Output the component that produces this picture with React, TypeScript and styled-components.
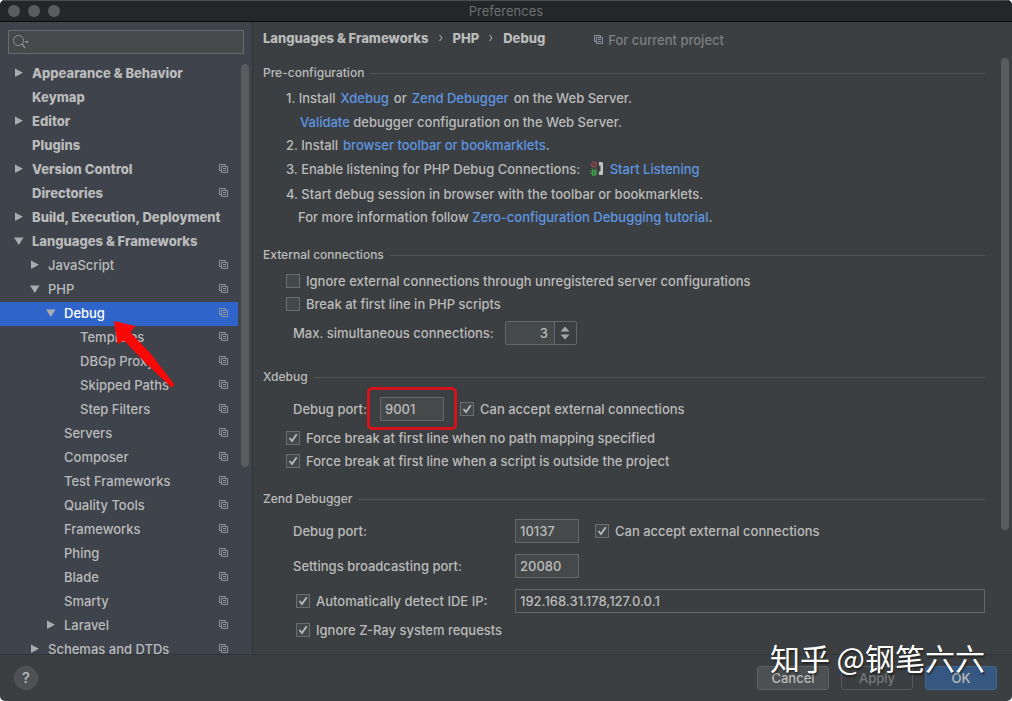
import React, { useId } from "react";
import styled, { createGlobalStyle, css } from "styled-components";

const GlobalStyle = createGlobalStyle`
  *, *::before, *::after { box-sizing: border-box; }
  html, body { margin: 0; background: #ffffff; }
  body, button, input {
    font-family: Inter, "Noto Sans CJK SC", sans-serif;
    font-size: 13px;
    line-height: 16px;
    color: #bbbbbb;
  }
`;

const Window = styled.div`
  position: relative;
  height: 100vh;
  display: flex;
  flex-direction: column;
  background: #3c3f41;
  border-radius: 5px;
  overflow: hidden;
`;

const TitleBar = styled.header`
  flex: none;
  height: 22px;
  display: grid;
  grid-template-columns: 1fr auto 1fr;
  align-items: center;
  padding: 0 8px;
  background: #242729;
  border-top: 1px solid #4b4e50;
  border-bottom: 1px solid #0a0a0a;
`;

const Lights = styled.div`
  display: flex;
  gap: 8px;
`;

const Light = styled.span`
  width: 12px;
  height: 12px;
  border-radius: 50%;
  background: #5a5c5e;
`;

const WindowTitle = styled.h1`
  margin: 0;
  font-size: 13px;
  font-weight: 400;
  color: #6d6f71;
`;

const Body = styled.div`
  flex: 1;
  min-height: 0;
  display: flex;
`;

const Sidebar = styled.nav`
  flex: none;
  width: 253px;
  display: flex;
  flex-direction: column;
  padding-top: 8px;
  background: #3e434c;
  border-right: 1px solid #313335;
`;

const SearchBox = styled.label`
  flex: none;
  display: flex;
  align-items: center;
  height: 24px;
  margin: 0 8px;
  padding: 0 4px;
  background: #45494a;
  border: 1px solid #686b6d;
`;

const SearchInput = styled.input`
  flex: 1;
  min-width: 0;
  padding: 0 4px;
  border: 0;
  outline: 0;
  background: transparent;
`;

const TreeArea = styled.div`
  flex: 1;
  min-height: 0;
  display: flex;
  gap: 3px;
  padding: 8px 3px 0 0;
  overflow: hidden;
`;

const Tree = styled.ul`
  flex: 1;
  margin: 0;
  padding: 0;
  list-style: none;
`;

const TreeRow = styled.li<{ $level: number; $selected?: boolean }>`
  display: flex;
  align-items: center;
  height: 24px;
  padding: 0 9px 2px ${(p) => 14 + p.$level * 16}px;
  font-weight: ${(p) => (p.$level === 0 ? 800 : 500)};
  white-space: nowrap;
  ${(p) =>
    p.$selected &&
    css`
      background: #2f65ca;
      color: #ffffff;
    `}
`;

const ArrowSlot = styled.span`
  flex: none;
  display: flex;
  width: 18px;
`;

const RowLabel = styled.span`
  flex: 1;
`;

const Thumb = styled.div<{ $share: number }>`
  flex: none;
  width: 8px;
  height: ${(p) => p.$share}%;
  margin-top: 2px;
  border-radius: 4px;
  background: #595b5d;
`;

const Main = styled.main`
  flex: 1;
  min-width: 0;
  display: flex;
  flex-direction: column;
  padding-left: 10px;
  overflow: hidden;
`;

const Header = styled.div`
  flex: none;
  display: flex;
  align-items: center;
  height: 34px;
  padding-bottom: 2px;
`;

const Crumbs = styled.div`
  display: flex;
  align-items: center;
  gap: 10px;
  font-weight: 800;
`;

const ProjectNote = styled.span`
  display: flex;
  align-items: center;
  gap: 4px;
  margin-left: 49px;
  padding-top: 4px;
  color: #7d7f81;
  font-weight: 500;
`;

const Scroller = styled.div`
  flex: 1;
  min-height: 0;
  display: flex;
  gap: 16px;
  padding-right: 3px;
`;

const Form = styled.form`
  flex: 1;
  min-width: 0;
  padding-top: 9px;
  font-weight: 500;
`;

const Section = styled.section`
  margin-bottom: 19px;
`;

const SectionTitle = styled.h2`
  display: flex;
  align-items: center;
  gap: 6px;
  margin: 0;
  font-size: 12px;
  font-weight: 500;
  &::after {
    content: "";
    flex: 1;
    height: 1px;
    background: #515456;
  }
`;

const Steps = styled.ol`
  margin: 0;
  padding: 5px 0 0 23px;
  list-style: none;
`;

const Line = styled.div<{ $height: number; $indent?: number }>`
  display: flex;
  align-items: center;
  gap: 5px;
  height: ${(p) => p.$height}px;
  padding-left: ${(p) => p.$indent ?? 0}px;
  white-space: pre;
`;

const Link = styled.a`
  color: #5c96e2;
  text-decoration: none;
`;

const Options = styled.div`
  padding-top: 6px;
`;

const CheckRow = styled.div`
  display: flex;
  align-items: center;
  height: 23px;
  padding-left: 23px;
`;

const CheckLabel = styled.label`
  display: flex;
  align-items: center;
  gap: 6px;
  white-space: nowrap;
`;

const Tick = styled.input`
  appearance: none;
  flex: none;
  width: 14px;
  height: 14px;
  margin: 0;
  border: 1px solid #6b6d6e;
  background: #43494a;
`;

const TickBox = styled.span`
  position: relative;
  display: flex;
  svg {
    position: absolute;
    inset: 0;
    display: none;
    pointer-events: none;
  }
  input:checked + svg { display: block; }
`;

const TextField = styled.input<{ $wide?: boolean; $plain?: boolean }>`
  width: ${(p) => (p.$wide ? "100%" : "64px")};
  height: 24px;
  padding: 0 4px;
  border: 1px solid #646769;
  border-radius: 0;
  outline: 0;
  background: ${(p) => (p.$plain ? "#3c3f41" : "#45494a")};
  font-weight: 500;
`;

const SpinnerRow = styled.div`
  display: flex;
  align-items: center;
  gap: 11px;
  margin: 6px 0 24px;
  padding-left: 30px;
`;

const Spinner = styled.span`
  display: flex;
  width: 72px;
  height: 24px;
  border: 1px solid #646769;
  border-radius: 2px;
`;

const SpinnerInput = styled.input`
  flex: 1;
  min-width: 0;
  padding: 0 6px;
  border: 0;
  outline: 0;
  background: #45494a;
  text-align: right;
  font-weight: 500;
`;

const SpinnerButtons = styled.span`
  display: flex;
  flex-direction: column;
  width: 22px;
  border-left: 1px solid #646769;
`;

const StepButton = styled.button<{ $up?: boolean }>`
  flex: 1;
  display: flex;
  justify-content: center;
  align-items: ${(p) => (p.$up ? "flex-end" : "flex-start")};
  padding: 1px 0;
  border: 0;
  background: transparent;
`;

const PortRow = styled.div`
  display: flex;
  align-items: center;
  gap: 16px;
  margin: 12px 0 5px;
  padding-left: 30px;
`;

const PortLabel = styled.label`
  width: 71px;
  white-space: nowrap;
`;

const Highlight = styled.span`
  position: relative;
  display: flex;
  &::after {
    content: "";
    position: absolute;
    inset: -10px -13px -9px;
    border: 3px solid #d3131b;
    border-radius: 5px;
    pointer-events: none;
  }
`;

const ZendGrid = styled.div`
  display: grid;
  grid-template-columns: 222px 1fr;
  row-gap: 11px;
  align-items: center;
  margin-top: 12px;
  padding-left: 30px;
`;

const PortCell = styled.div`
  display: flex;
  align-items: center;
  gap: 16px;
`;

const DetectCell = styled.div`
  padding-left: 3px;
`;

const LastTick = styled.div`
  padding: 9px 0 0 33px;
`;

const Footer = styled.footer`
  flex: none;
  display: flex;
  align-items: center;
  justify-content: space-between;
  height: 47px;
  padding: 0 15px 0 14px;
  border-top: 1px solid #323537;
`;

const HelpButton = styled.button`
  width: 24px;
  height: 24px;
  padding: 0;
  border: 1px solid #56595b;
  border-radius: 50%;
  background: #4e5153;
  font-size: 15px;
  font-weight: 500;
`;

const Actions = styled.div`
  display: flex;
  gap: 12px;
`;

const tones = {
  normal: css`
    background: #4c5052;
    border-color: #5e6162;
  `,
  muted: css`
    background: #3c3f41;
    border-color: #575a5c;
    color: #75777a;
  `,
  primary: css`
    background: #365880;
    border-color: #44658c;
  `,
};

const ActionButton = styled.button<{ $tone: keyof typeof tones }>`
  width: 72px;
  height: 24px;
  padding: 0;
  border: 1px solid;
  border-radius: 3px;
  font-weight: 500;
  ${(p) => tones[p.$tone]}
`;

const Pointer = styled.svg`
  position: absolute;
  left: 108px;
  top: 312px;
  pointer-events: none;
`;

const Watermark = styled.div`
  position: absolute;
  right: 27px;
  bottom: 24px;
  font-family: "Noto Sans CJK SC", sans-serif;
  font-size: 30px;
  line-height: 40px;
  color: #ffffff;
  text-shadow: 1px 2px 2px rgba(0, 0, 0, 0.5);
  white-space: nowrap;
  pointer-events: none;
`;

const CopyIcon = ({ color = "#8d949e" }: { color?: string }) => (
  <svg width="10" height="10" viewBox="0 0 10 10" fill="none" stroke={color} aria-hidden="true">
    <path d="M2.500 6.500h-2v-6h6v2" />
    <path d="M2.500 2.500h6v6h-6z" />
    <path d="M4 4.500h3M4 6.500h3" />
  </svg>
);

const TreeArrow = ({ open }: { open: boolean }) => (
  <svg width="10" height="10" viewBox="0 0 10 10" fill="#a9abae" aria-hidden="true">
    {open ? <path d="M0 1.500h9.500L4.750 9z" /> : <path d="M1 0.500v8.500L9 4.750z" />}
  </svg>
);

const SearchIcon = () => (
  <svg width="18" height="14" viewBox="0 0 18 14" fill="none" stroke="#8e9193" aria-hidden="true">
    <circle cx="5.500" cy="5.500" r="5" />
    <path d="M9 9l3 4" strokeWidth="1.300" />
    <path d="M11.500 6h4.500l-2.250 2.500z" fill="#8e9193" stroke="none" />
  </svg>
);

const ListenIcon = () => (
  <svg width="16" height="16" viewBox="0 0 16 16" fill="none" aria-hidden="true">
    <circle cx="5" cy="3.500" r="2.600" stroke="#b5484a" />
    <path d="M3.300 5.200l3.400-3.400" stroke="#b5484a" />
    <path d="M1.500 10h7M1.500 12.500h7M3 7.500l1 1.500M7 7.500L6 9" stroke="#3f9b4c" />
    <ellipse cx="5" cy="12" rx="2.300" ry="3.200" fill="#3f9b4c" />
    <path d="M4 11h2M4 13h2" stroke="#3c3f41" strokeWidth="0.600" />
    <path d="M10 1h2.500q1.500 0 1.500 1.500v10q0 1.500-1.500 1.500H10v-3.500h1.500v-6H10z" fill="#c3c5c7" />
  </svg>
);

const Check = ({ label, checked = false }: { label: string; checked?: boolean }) => {
  const id = useId();
  return (
    <CheckLabel htmlFor={id}>
      <TickBox>
        <Tick id={id} type="checkbox" defaultChecked={checked} />
        <svg width="14" height="14" viewBox="0 0 14 14" fill="none" stroke="#b8babb" strokeWidth="1.800">
          <path d="M3.500 7l2.500 3 4.700-6.800" />
        </svg>
      </TickBox>
      {label}
    </CheckLabel>
  );
};

type Item = { label: string; level: number; arrow?: "open" | "closed"; project?: boolean; selected?: boolean };

const items: Item[] = [
  { label: "Appearance & Behavior", level: 0, arrow: "closed" },
  { label: "Keymap", level: 0 },
  { label: "Editor", level: 0, arrow: "closed" },
  { label: "Plugins", level: 0 },
  { label: "Version Control", level: 0, arrow: "closed", project: true },
  { label: "Directories", level: 0, project: true },
  { label: "Build, Execution, Deployment", level: 0, arrow: "closed" },
  { label: "Languages & Frameworks", level: 0, arrow: "open" },
  { label: "JavaScript", level: 1, arrow: "closed", project: true },
  { label: "PHP", level: 1, arrow: "open", project: true },
  { label: "Debug", level: 2, arrow: "open", project: true, selected: true },
  { label: "Templates", level: 3, project: true },
  { label: "DBGp Proxy", level: 3, project: true },
  { label: "Skipped Paths", level: 3, project: true },
  { label: "Step Filters", level: 3, project: true },
  { label: "Servers", level: 2, project: true },
  { label: "Composer", level: 2, project: true },
  { label: "Test Frameworks", level: 2, project: true },
  { label: "Quality Tools", level: 2, project: true },
  { label: "Frameworks", level: 2, project: true },
  { label: "Phing", level: 2, project: true },
  { label: "Blade", level: 2, project: true },
  { label: "Smarty", level: 2, project: true },
  { label: "Laravel", level: 2, arrow: "closed", project: true },
  { label: "Schemas and DTDs", level: 1, arrow: "closed", project: true },
];

const Chevron = () => (
  <svg width="4" height="8" viewBox="0 0 4 8" fill="none" stroke="#bbbbbb" aria-hidden="true">
    <path d="M0.500 1l2.500 3-2.500 3" />
  </svg>
);

export default function App() {
  return (
    <>
      <GlobalStyle />
      <Window>
        <TitleBar>
          <Lights>
            <Light />
            <Light />
            <Light />
          </Lights>
          <WindowTitle>Preferences</WindowTitle>
        </TitleBar>

        <Body>
          <Sidebar>
            <SearchBox>
              <SearchIcon />
              <SearchInput type="text" aria-label="Search settings" />
            </SearchBox>
            <TreeArea>
              <Tree>
                {items.map((item) => (
                  <TreeRow key={item.label} $level={item.level} $selected={item.selected}>
                    <ArrowSlot>{item.arrow && <TreeArrow open={item.arrow === "open"} />}</ArrowSlot>
                    <RowLabel>{item.label}</RowLabel>
                    {item.project && <CopyIcon />}
                  </TreeRow>
                ))}
              </Tree>
              <Thumb $share={68} />
            </TreeArea>
          </Sidebar>

          <Main>
            <Header>
              <Crumbs>
                <span>Languages &amp; Frameworks</span>
                <Chevron />
                <span>PHP</span>
                <Chevron />
                <span>Debug</span>
              </Crumbs>
              <ProjectNote>
                <CopyIcon />
                For current project
              </ProjectNote>
            </Header>

            <Scroller>
              <Form onSubmit={(e) => e.preventDefault()}>
                <Section>
                  <SectionTitle>Pre-configuration</SectionTitle>
                  <Steps>
                    <li>
                      <Line $height={24}>
                        <span>1. Install</span>
                        <Link href="#xdebug">Xdebug</Link>
                        <span>or</span>
                        <Link href="#zend">Zend Debugger</Link>
                        <span>on the Web Server.</span>
                      </Line>
                      <Line $height={24} $indent={14}>
                        <span>
                          <Link href="#validate">Validate</Link> debugger configuration on the Web Server.
                        </span>
                      </Line>
                    </li>
                    <li>
                      <Line $height={22}>
                        <span>2. Install</span>
                        <span>
                          <Link href="#toolbar">browser toolbar or bookmarklets</Link>.
                        </span>
                      </Line>
                    </li>
                    <li>
                      <Line $height={26}>
                        <span>3. Enable listening for PHP Debug Connections: </span>
                        <ListenIcon />
                        <Link href="#listen">Start Listening</Link>
                      </Line>
                    </li>
                    <li>
                      <Line $height={24}>4. Start debug session in browser with the toolbar or bookmarklets.</Line>
                      <Line $height={22} $indent={12}>
                        <span>
                          For more information follow <Link href="#tutorial">Zero-configuration Debugging tutorial</Link>.
                        </span>
                      </Line>
                    </li>
                  </Steps>
                </Section>

                <Section>
                  <SectionTitle>External connections</SectionTitle>
                  <Options>
                    <CheckRow>
                      <Check label="Ignore external connections through unregistered server configurations" />
                    </CheckRow>
                    <CheckRow>
                      <Check label="Break at first line in PHP scripts" />
                    </CheckRow>
                    <SpinnerRow>
                      <label htmlFor="max-connections">Max. simultaneous connections:</label>
                      <Spinner>
                        <SpinnerInput id="max-connections" type="text" defaultValue="3" />
                        <SpinnerButtons>
                          <StepButton type="button" $up aria-label="Increase">
                            <svg width="10" height="6" viewBox="0 0 10 6" fill="#a4a6a8">
                              <path d="M0.500 5.500L5 0.500l4.500 5z" />
                            </svg>
                          </StepButton>
                          <StepButton type="button" aria-label="Decrease">
                            <svg width="10" height="6" viewBox="0 0 10 6" fill="#a4a6a8">
                              <path d="M0.500 0.500L5 5.500l4.500-5z" />
                            </svg>
                          </StepButton>
                        </SpinnerButtons>
                      </Spinner>
                    </SpinnerRow>
                  </Options>
                </Section>

                <Section>
                  <SectionTitle>Xdebug</SectionTitle>
                  <PortRow>
                    <PortLabel htmlFor="xdebug-port">Debug port:</PortLabel>
                    <Highlight>
                      <TextField id="xdebug-port" type="text" defaultValue="9001" />
                    </Highlight>
                    <Check label="Can accept external connections" checked />
                  </PortRow>
                  <CheckRow>
                    <Check label="Force break at first line when no path mapping specified" checked />
                  </CheckRow>
                  <CheckRow>
                    <Check label="Force break at first line when a script is outside the project" checked />
                  </CheckRow>
                </Section>

                <Section>
                  <SectionTitle>Zend Debugger</SectionTitle>
                  <ZendGrid>
                    <label htmlFor="zend-port">Debug port:</label>
                    <PortCell>
                      <TextField id="zend-port" type="text" defaultValue="10137" />
                      <Check label="Can accept external connections" checked />
                    </PortCell>
                    <label htmlFor="broadcast-port">Settings broadcasting port:</label>
                    <TextField id="broadcast-port" type="text" defaultValue="20080" />
                    <DetectCell>
                      <Check label="Automatically detect IDE IP:" checked />
                    </DetectCell>
                    <TextField $wide $plain aria-label="IDE IP" type="text" defaultValue="192.168.31.178,127.0.0.1" />
                  </ZendGrid>
                  <LastTick>
                    <Check label="Ignore Z-Ray system requests" checked />
                  </LastTick>
                </Section>
              </Form>
              <Thumb $share={79} />
            </Scroller>
          </Main>
        </Body>

        <Footer>
          <HelpButton type="button">?</HelpButton>
          <Actions>
            <ActionButton type="button" $tone="normal">Cancel</ActionButton>
            <ActionButton type="button" $tone="muted">Apply</ActionButton>
            <ActionButton type="button" $tone="primary">OK</ActionButton>
          </Actions>
        </Footer>

        <Pointer width="72" height="80" viewBox="0 0 72 80" fill="#f90808" aria-hidden="true">
          <path d="M6 9L27.500 14L22.500 20.500L43 42L66 72Q66 75.500 63 75L36.500 50L16 28.500L9.500 32z" />
        </Pointer>
        <Watermark>知乎 @钢笔六六</Watermark>
      </Window>
    </>
  );
}
